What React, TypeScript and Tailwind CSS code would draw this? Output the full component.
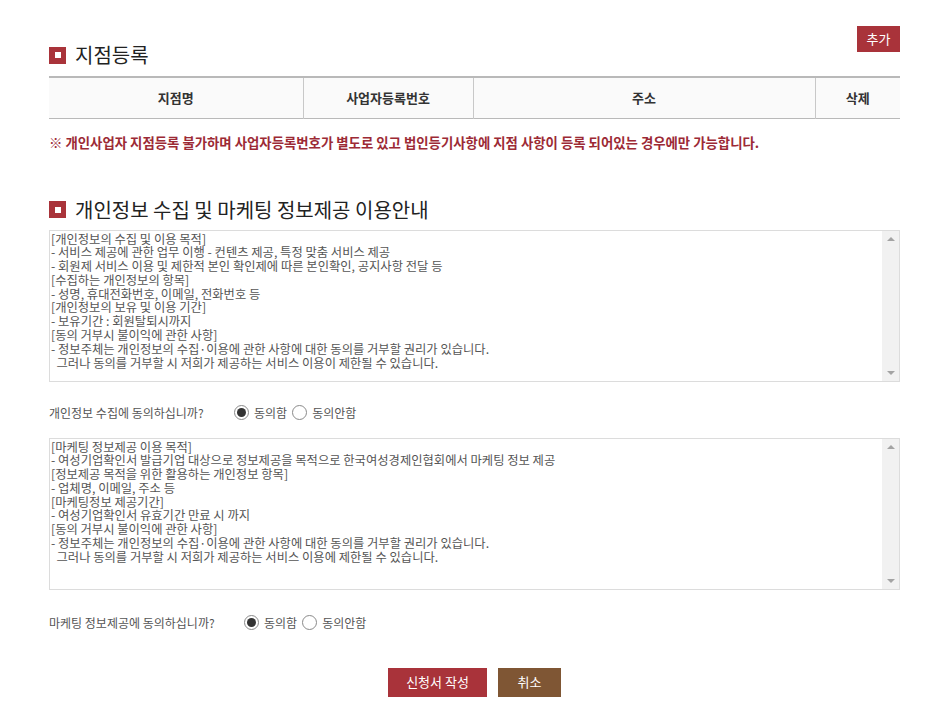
import React from "react";

const font = {
    fontFamily: '"Noto Sans CJK KR", "Noto Sans", sans-serif',
};

const privacyLines = [
    "[개인정보의 수집 및 이용 목적]",
    "- 서비스 제공에 관한 업무 이행 - 컨텐츠 제공, 특정 맞춤 서비스 제공",
    "- 회원제 서비스 이용 및 제한적 본인 확인제에 따른 본인확인, 공지사항 전달 등",
    "[수집하는 개인정보의 항목]",
    "- 성명, 휴대전화번호, 이메일, 전화번호 등",
    "[개인정보의 보유 및 이용 기간]",
    "- 보유기간 : 회원탈퇴시까지",
    "[동의 거부시 불이익에 관한 사항]",
    "- 정보주체는 개인정보의 수집·이용에 관한 사항에 대한 동의를 거부할 권리가 있습니다.",
    "  그러나 동의를 거부할 시 저희가 제공하는 서비스 이용이 제한될 수 있습니다.",
];

const marketingLines = [
    "[마케팅 정보제공 이용 목적]",
    "- 여성기업확인서 발급기업 대상으로 정보제공을 목적으로 한국여성경제인협회에서 마케팅 정보 제공",
    "[정보제공 목적을 위한 활용하는 개인정보 항목]",
    "- 업체명, 이메일, 주소 등",
    "[마케팅정보 제공기간]",
    "- 여성기업확인서 유효기간 만료 시 까지",
    "[동의 거부시 불이익에 관한 사항]",
    "- 정보주체는 개인정보의 수집·이용에 관한 사항에 대한 동의를 거부할 권리가 있습니다.",
    "  그러나 동의를 거부할 시 저희가 제공하는 서비스 이용에 제한될 수 있습니다.",
];

function SectionTitle({ children }: { children: React.ReactNode }) {
    return (
        <div className="flex items-center gap-[9px] h-[24px]">
            <span className="w-[17px] h-[17px] bg-[#a9333a] flex items-center justify-center">
                <span className="w-[6px] h-[6px] bg-white" />
            </span>
            <h2 className="text-[20px] leading-[24px] text-[#222] font-normal">
                {children}
            </h2>
        </div>
    );
}

function TermsBox({ lines }: { lines: string[] }) {
    return (
        <div className="flex h-[152px] border border-[#dcdcdc] bg-white">
            <div className="flex-1 px-[1px] pt-[2px] text-[12.3px] leading-[13.8px] text-[#555] whitespace-pre">
                {lines.map((line, i) => (
                    <div key={i}>{line}</div>
                ))}
            </div>
            <div className="w-[17px] bg-[#f1f1f1] flex flex-col justify-between items-center py-[6px]">
                <span className="w-0 h-0 border-l-[4px] border-r-[4px] border-b-[4px] border-l-transparent border-r-transparent border-b-[#a3a3a3]" />
                <span className="w-0 h-0 border-l-[4px] border-r-[4px] border-t-[4px] border-l-transparent border-r-transparent border-t-[#a3a3a3]" />
            </div>
        </div>
    );
}

function Radio({ checked, label }: { checked: boolean; label: string }) {
    return (
        <label className="flex items-center gap-[5px]">
            <span className="w-[15px] h-[15px] rounded-full border border-[#8a8a8a] bg-white flex items-center justify-center">
                {checked && <span className="w-[9px] h-[9px] rounded-full bg-[#333]" />}
            </span>
            <span>{label}</span>
        </label>
    );
}

function ConsentRow({ question, gap }: { question: string; gap: string }) {
    return (
        <div className="flex items-center text-[12px] text-[#555] h-[20px]">
            <span className={gap}>{question}</span>
            <div className="flex items-center gap-[5px]">
                <Radio checked label="동의함" />
                <Radio checked={false} label="동의안함" />
            </div>
        </div>
    );
}

export default function App() {
    return (
        <div className="min-h-[719px] bg-white" style={font}>
            <div className="w-[851px] mx-auto pt-[26px]">
                <div className="flex justify-end">
                    <button
                        type="button"
                        className="h-[26px] w-[43px] bg-[#a9333a] text-white text-[13px] leading-[26px]"
                    >
                        추가
                    </button>
                </div>
                <div className="-mt-[9px]">
                    <SectionTitle>지점등록</SectionTitle>
                </div>

                <table className="w-full mt-[9px] border-t-2 border-t-[#b9b9b9] border-b border-b-[#b9b9b9] border-collapse">
                    <thead>
                        <tr className="h-[41px] bg-[#fafafa] text-[13px] font-bold text-[#333]">
                            <th className="w-[254px] border-r border-[#c8c8c8]">지점명</th>
                            <th className="w-[170px] border-r border-[#c8c8c8]">사업자등록번호</th>
                            <th className="w-[342px] border-r border-[#c8c8c8]">주소</th>
                            <th>삭제</th>
                        </tr>
                    </thead>
                </table>

                <p className="mt-[13px] text-[13.4px] leading-[20px] font-bold text-[#9c2a35]">
                    ※ 개인사업자 지점등록 불가하며 사업자등록번호가 별도로 있고 법인등기사항에 지점 사항이 등록 되어있는 경우에만 가능합니다.
                </p>

                <div className="mt-[46px]">
                    <SectionTitle>개인정보 수집 및 마케팅 정보제공 이용안내</SectionTitle>
                </div>

                <div className="mt-[8px]">
                    <TermsBox lines={privacyLines} />
                </div>

                <div className="mt-[21px]">
                    <ConsentRow question="개인정보 수집에 동의하십니까?" gap="w-[185px]" />
                </div>

                <div className="mt-[15px]">
                    <TermsBox lines={marketingLines} />
                </div>

                <div className="mt-[23px]">
                    <ConsentRow question="마케팅 정보제공에 동의하십니까?" gap="w-[195px]" />
                </div>

                <div className="flex justify-center gap-[11px] mt-[35px] pb-[20px]">
                    <button
                        type="button"
                        className="h-[29px] w-[99px] bg-[#a9333a] text-white text-[13px]"
                    >
                        신청서 작성
                    </button>
                    <button
                        type="button"
                        className="h-[29px] w-[63px] bg-[#7f5634] text-white text-[13px]"
                    >
                        취소
                    </button>
                </div>
            </div>
        </div>
    );
}
